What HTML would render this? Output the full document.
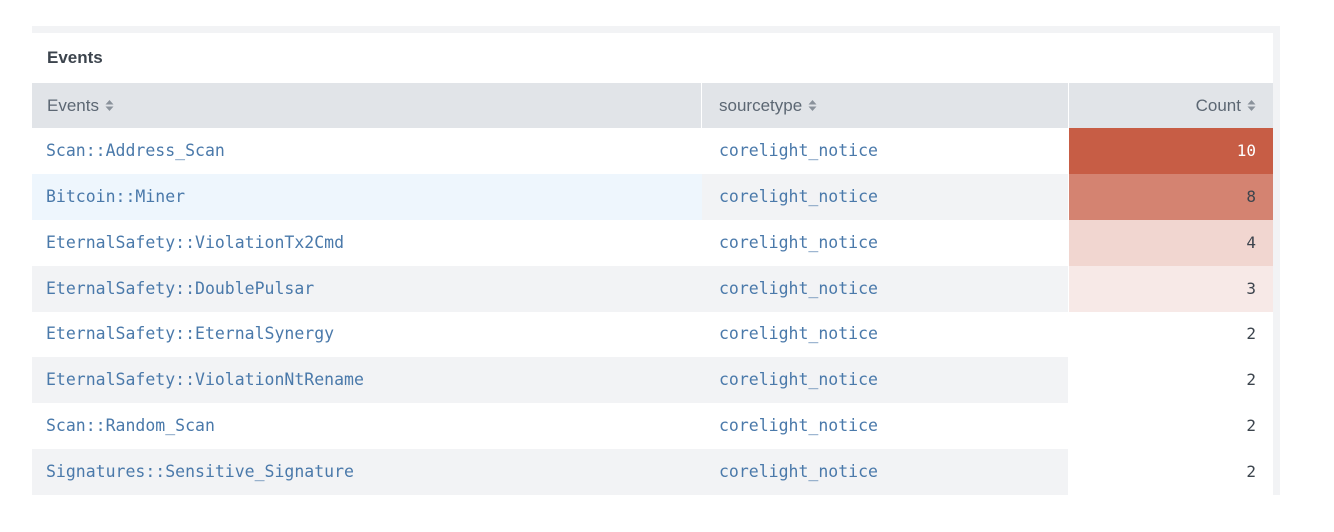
<!DOCTYPE html>
<html><head><style>
body{margin:0;width:1334px;height:532px;background:#fff;position:relative;overflow:hidden;font-family:"Liberation Sans",sans-serif}
.frame{position:absolute;left:32px;top:26px;width:1248px;height:7px;background:#f2f3f5}
.rb{position:absolute;left:1273px;top:26px;width:7px;height:469px;background:#f2f3f5}
.title{position:absolute;left:47px;top:48px;font-weight:bold;font-size:17px;color:#3c444d}
.c{position:absolute;box-sizing:border-box;height:46px;line-height:46px;font-size:16px;white-space:nowrap}
.h{background:#e1e4e8;color:#5c6773;font-size:17px}
.m{font-family:"DejaVu Sans Mono","Liberation Mono",monospace;color:#4a79aa;font-size:16.5px}
.n{font-family:"DejaVu Sans Mono","Liberation Mono",monospace;color:#3c444d;text-align:right;padding-right:17px;font-size:16px}
.s{display:inline-block;vertical-align:middle;margin-left:6px;margin-top:-3px}
</style></head><body>
<div class="frame"></div><div class="rb"></div>
<div class="title">Events</div>
<div class="c h" style="left:32px;top:83px;width:669px;padding-left:15px">Events<svg class="s" width="9" height="13" viewBox="0 0 9 13"><path d="M0.5 5.5L4.5 1L8.5 5.5Z M0.5 7.5L4.5 12L8.5 7.5Z" fill="#8a929b"/></svg></div>
<div class="c h" style="left:702px;top:83px;width:366px;padding-left:17px">sourcetype<svg class="s" width="9" height="13" viewBox="0 0 9 13"><path d="M0.5 5.5L4.5 1L8.5 5.5Z M0.5 7.5L4.5 12L8.5 7.5Z" fill="#8a929b"/></svg></div>
<div class="c h" style="left:1069px;top:83px;width:204px;text-align:right;padding-right:17px">Count<svg class="s" width="9" height="13" viewBox="0 0 9 13"><path d="M0.5 5.5L4.5 1L8.5 5.5Z M0.5 7.5L4.5 12L8.5 7.5Z" fill="#8a929b"/></svg></div>

<div class="c m" style="left:32px;top:128px;width:669px;padding-left:14px;background:#fff">Scan::Address_Scan</div>
<div class="c m" style="left:702px;top:128px;width:366px;padding-left:17px;background:#fff">corelight_notice</div>
<div class="c n" style="left:1069px;top:128px;width:204px;background:#c75d45;color:#fff">10</div>

<div class="c m" style="left:32px;top:174px;width:670px;padding-left:14px;background:#eef6fd">Bitcoin::Miner</div>
<div class="c m" style="left:702px;top:174px;width:366px;padding-left:17px;background:#f2f3f5">corelight_notice</div>
<div class="c n" style="left:1069px;top:174px;width:204px;background:#d48371">8</div>

<div class="c m" style="left:32px;top:220px;width:669px;padding-left:14px">EternalSafety::ViolationTx2Cmd</div>
<div class="c m" style="left:702px;top:220px;width:366px;padding-left:17px">corelight_notice</div>
<div class="c n" style="left:1069px;top:220px;width:204px;background:#f1d6d0">4</div>

<div class="c m" style="left:32px;top:266px;width:1036px;padding-left:14px;background:#f2f3f5">EternalSafety::DoublePulsar</div>
<div class="c m" style="left:702px;top:266px;width:366px;padding-left:17px;background:#f2f3f5">corelight_notice</div>
<div class="c n" style="left:1069px;top:266px;width:204px;background:#f7e9e7">3</div>

<div class="c m" style="left:32px;top:311px;width:669px;padding-left:14px">EternalSafety::EternalSynergy</div>
<div class="c m" style="left:702px;top:311px;width:366px;padding-left:17px">corelight_notice</div>
<div class="c n" style="left:1069px;top:311px;width:204px">2</div>

<div class="c m" style="left:32px;top:357px;width:1036px;padding-left:14px;background:#f2f3f5">EternalSafety::ViolationNtRename</div>
<div class="c m" style="left:702px;top:357px;width:366px;padding-left:17px">corelight_notice</div>
<div class="c n" style="left:1069px;top:357px;width:204px">2</div>

<div class="c m" style="left:32px;top:403px;width:669px;padding-left:14px">Scan::Random_Scan</div>
<div class="c m" style="left:702px;top:403px;width:366px;padding-left:17px">corelight_notice</div>
<div class="c n" style="left:1069px;top:403px;width:204px">2</div>

<div class="c m" style="left:32px;top:449px;width:1036px;padding-left:14px;background:#f2f3f5">Signatures::Sensitive_Signature</div>
<div class="c m" style="left:702px;top:449px;width:366px;padding-left:17px">corelight_notice</div>
<div class="c n" style="left:1069px;top:449px;width:204px">2</div>
</body></html>
